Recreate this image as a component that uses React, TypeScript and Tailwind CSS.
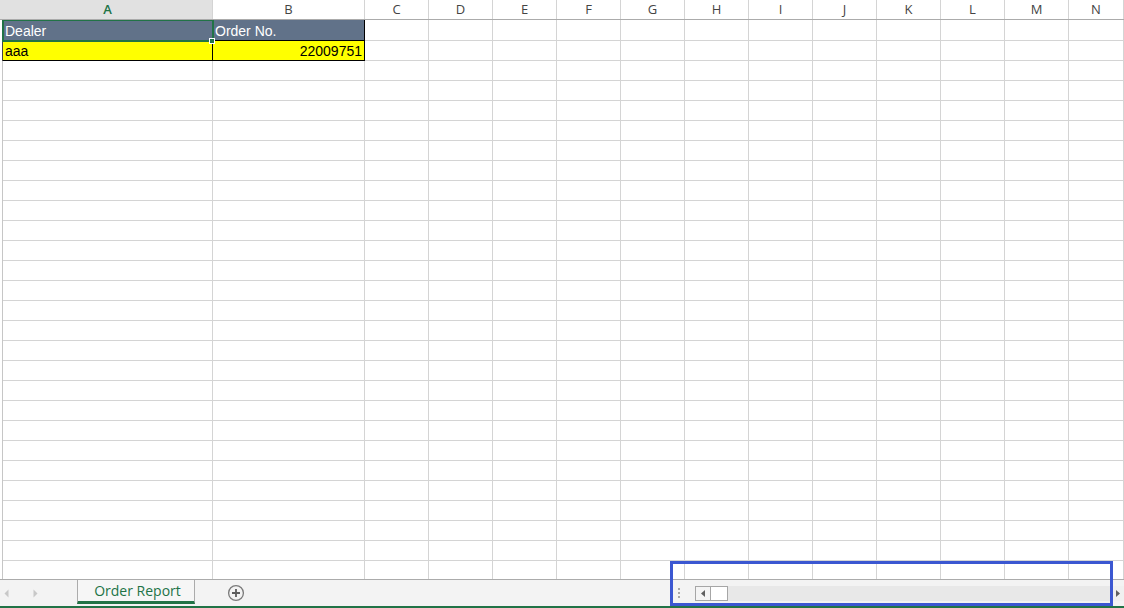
import React from 'react';

// Column layout of the visible sheet (width includes the right gridline)
const COLUMNS = [
    { key: 'A', w: 210 },
    { key: 'B', w: 152 },
    { key: 'C', w: 64 },
    { key: 'D', w: 64 },
    { key: 'E', w: 64 },
    { key: 'F', w: 64 },
    { key: 'G', w: 64 },
    { key: 'H', w: 64 },
    { key: 'I', w: 64 },
    { key: 'J', w: 64 },
    { key: 'K', w: 64 },
    { key: 'L', w: 64 },
    { key: 'M', w: 64 },
    { key: 'N', w: 55 },
];

const ROW_COUNT = 28;

const FONT_UI = { fontFamily: '"Open Sans", "Noto Sans", sans-serif' };
const FONT_CELL = { fontFamily: '"Liberation Sans", Arial, sans-serif' };

function ColumnHeader() {
    return (
        <div className="flex h-[20px] shrink-0 border-b border-[#ababab]" style={FONT_UI}>
            <div className="w-[3px] bg-[#e1e1e1]" />
            {COLUMNS.map(col => (
                <div
                    key={col.key}
                    style={{ width: col.w }}
                    className={
                        col.key === 'A'
                            ? 'flex items-center justify-center bg-[#e1e1e1] border-r border-[#d4d4d4] text-[13px] font-semibold text-[#217346]'
                            : 'flex items-center justify-center bg-white border-r border-[#d4d4d4] text-[13px] text-[#444]'
                    }
                >
                    {col.key}
                </div>
            ))}
        </div>
    );
}

function Cell({ row, col }: { row: number; col: { key: string; w: number } }) {
    const inTable = row <= 2 && (col.key === 'A' || col.key === 'B');

    if (!inTable) {
        return <div style={{ width: col.w }} className="h-full border-r border-b border-[#d4d4d4]" />;
    }

    if (row === 1) {
        return (
            <div
                style={{ width: col.w, ...FONT_CELL }}
                className="h-full flex items-center pl-[2px] pt-[2px] bg-[#617289] border-r border-b border-black text-white text-[14px]"
            >
                {col.key === 'A' ? 'Dealer' : 'Order No.'}
            </div>
        );
    }

    return (
        <div
            style={{ width: col.w, ...FONT_CELL }}
            className={
                col.key === 'A'
                    ? 'h-full flex items-center pl-[2px] pt-[2px] bg-[#ffff00] border-r border-b border-black text-black text-[14px]'
                    : 'h-full flex items-center justify-end pr-[2px] pt-[2px] bg-[#ffff00] border-r border-b border-black text-black text-[14px]'
            }
        >
            {col.key === 'A' ? 'aaa' : '22009751'}
        </div>
    );
}

function Grid() {
    const rows = Array.from({ length: ROW_COUNT }, (_, i) => i + 1);

    return (
        <div className="relative h-[559px] shrink-0 overflow-hidden bg-white">
            {rows.map(r => (
                <div key={r} className={r === 1 ? 'flex h-[21px]' : 'flex h-[20px]'}>
                    <div
                        className={
                            r <= 2
                                ? 'w-[3px] h-full border-r border-[#444]'
                                : 'w-[3px] h-full border-r border-[#c6c6c6]'
                        }
                    />
                    {COLUMNS.map(col => (
                        <Cell key={col.key} row={r} col={col} />
                    ))}
                </div>
            ))}

            {/* Active cell selection on A1 */}
            <div className="absolute left-[2px] top-[-1px] w-[212px] h-[23px] border-2 border-[#217346] pointer-events-none" />
            <div className="absolute left-[209px] top-[18px] w-[6px] h-[6px] bg-[#217346] border border-white" />
        </div>
    );
}

function NavArrows() {
    return (
        <div className="w-[77px] flex items-center h-full">
            <svg width="5" height="9" viewBox="0 0 5 9" className="ml-[4px]">
                <path d="M4.5 0.5 L0.5 4.5 L4.5 8.5 Z" fill="#c8c8c8" />
            </svg>
            <svg width="5" height="9" viewBox="0 0 5 9" className="ml-[24px]">
                <path d="M0.5 0.5 L4.5 4.5 L0.5 8.5 Z" fill="#c8c8c8" />
            </svg>
        </div>
    );
}

function SheetTab() {
    return (
        <div className="w-[118px] h-[24px] flex items-center justify-center border-l border-r border-[#ababab] border-b-[3px] border-b-[#217346] bg-[#f6f6f6]">
            <span className="text-[14px] text-[#217346] leading-none pt-[1px] pl-[3px]" style={FONT_UI}>
                Order Report
            </span>
        </div>
    );
}

function AddSheetButton() {
    return (
        <div className="w-[82px] h-[26px] flex items-center justify-center">
            <svg width="18" height="18" viewBox="0 0 18 18">
                <circle cx="9" cy="9" r="7.4" fill="none" stroke="#7a7a7a" strokeWidth="1.3" />
                <path d="M9 5 V13 M5 9 H13" stroke="#5c5c5c" strokeWidth="1.8" />
            </svg>
        </div>
    );
}

function HorizontalScrollbar() {
    return (
        <div className="flex h-full">
            {/* Split handle */}
            <div className="w-[17px] flex flex-col items-start justify-center gap-[2px]">
                <span className="w-[2px] h-[2px] bg-[#a8a8a8]" />
                <span className="w-[2px] h-[2px] bg-[#a8a8a8]" />
                <span className="w-[2px] h-[2px] bg-[#a8a8a8]" />
            </div>
            <div className="w-[429px] flex mt-[6px] h-[15px]">
                <div className="w-[16px] h-full flex items-center justify-center border border-[#a6a6a6] bg-[#f4f4f4]">
                    <svg width="4" height="7" viewBox="0 0 4 7">
                        <path d="M4 0 L0 3.5 L4 7 Z" fill="#606060" />
                    </svg>
                </div>
                <div className="w-[17px] h-full border border-l-0 border-[#a6a6a6] bg-white" />
                <div className="flex-1 h-full bg-[#e8e8e8]" />
                <div className="w-[13px] h-full flex items-center justify-center border-l border-[#a6a6a6] bg-[#f0f0f0]">
                    <svg width="4" height="7" viewBox="0 0 4 7">
                        <path d="M0 0 L4 3.5 L0 7 Z" fill="#606060" />
                    </svg>
                </div>
            </div>
        </div>
    );
}

function SheetBar() {
    return (
        <div className="relative h-[29px] shrink-0 flex bg-[#f3f3f3] border-t border-[#ababab] border-b-2 border-b-[#217346]">
            <NavArrows />
            <SheetTab />
            <AddSheetButton />
            <div className="flex-1" />
            <HorizontalScrollbar />
        </div>
    );
}

export default function App() {
    return (
        <div className="relative w-[1124px] h-[608px] overflow-hidden flex flex-col bg-white">
            <ColumnHeader />
            <Grid />
            <SheetBar />

            {/* Blue highlight box around the scrollbar */}
            <div className="absolute left-[670px] top-[561px] w-[443px] h-[45px] border-[3px] border-[#3b57d1] pointer-events-none" />
        </div>
    );
}
